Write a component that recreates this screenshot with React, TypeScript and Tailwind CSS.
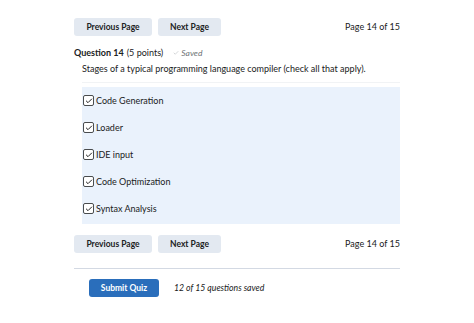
import { Check } from "lucide-react";

const options = ["Code Generation", "Loader", "IDE input", "Code Optimization", "Syntax Analysis"];

function PageNav() {
    return (
        <div className="flex items-center">
            <button className="h-[18px] w-[78px] rounded-[3px] bg-[#e3e9f1] text-[8.5px] font-bold text-[#202122]">Previous Page</button>
            <button className="ml-[6px] h-[18px] w-[63px] rounded-[3px] bg-[#e3e9f1] text-[8.5px] font-bold text-[#202122]">Next Page</button>
            <span className="ml-auto text-[9px] text-[#202122]">Page 14 of 15</span>
        </div>
    );
}

function CheckBox() {
    return (
        <span className="flex h-[11px] w-[11px] items-center justify-center rounded-[2px] border border-[#494c4e] bg-white">
            <Check size={8} strokeWidth={3} color="#202122" />
        </span>
    );
}

export default function App() {
    return (
        <div className="min-h-[323px] bg-white font-['Lato',sans-serif] text-[#202122]">
            <div className="mx-auto w-[326px] pt-[18px]">
                <PageNav />
                <div className="mt-[10px] flex h-[14px] items-center text-[9px] leading-[14px]">
                    <span className="font-bold">Question 14</span>
                    <span className="ml-[3px]">(5 points)</span>
                    <span className="ml-[10px] flex items-center text-[8.5px] italic text-[#6e7376]">
                        <Check size={6} strokeWidth={2} color="#a8adb0" className="mr-[2px]" />
                        Saved
                    </span>
                </div>
                <p className="ml-[8px] mt-[2px] text-[9px] leading-[14px]">Stages of a typical programming language compiler (check all that apply).</p>
                <div className="ml-[8px] mt-[6px] border-t border-[#f1f3f5] pt-[4px]">
                    <div className="flex flex-col bg-[#eaf2fc] pb-[2px]">
                        {options.map((opt, index) => (
                            <label key={index} className="flex h-[27px] items-center pl-[1px] text-[9px]">
                                <CheckBox />
                                <span className="ml-[2px]">{opt}</span>
                            </label>
                        ))}
                    </div>
                </div>
                <div className="mt-[11px]">
                    <PageNav />
                </div>
                <div className="mt-[15px] border-t border-[#d3d9e3]" />
                <div className="mt-[10px] flex items-center pl-[15px]">
                    <button className="h-[18px] w-[70px] rounded-[3px] bg-[#2a6ebb] text-[8.5px] font-bold text-white">Submit Quiz</button>
                    <span className="ml-[15px] text-[8.7px] italic">12 of 15 questions saved</span>
                </div>
            </div>
        </div>
    );
}
